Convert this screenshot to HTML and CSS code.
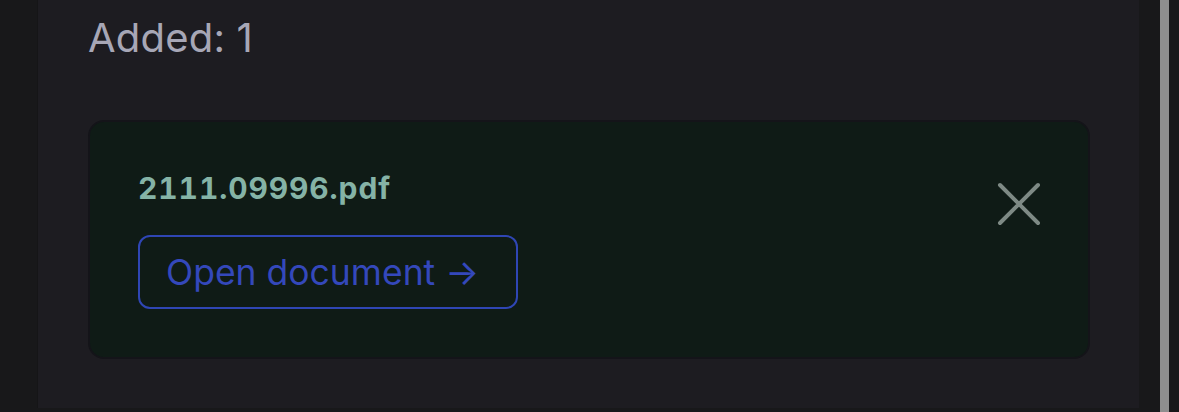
FILE: index.html
```html
<!DOCTYPE html>
<html lang="en">
<head>
<meta charset="utf-8">
<title>Added</title>
<link rel="stylesheet" href="styles.css">
</head>
<body>
<div class="layout">
  <main class="panel">
    <h2 class="summary">Added: 1</h2>
    <div class="card">
      <div class="card-body">
        <div class="filename">2111.09996.pdf</div>
        <a class="open-btn" href="#">Open document <span class="arrow">→</span></a>
      </div>
      <button class="close" aria-label="Dismiss">
        <svg width="44" height="44" viewBox="0 0 44 44" fill="none" stroke="currentColor" stroke-width="4" stroke-linecap="round">
          <path d="M3 3 L41 41 M41 3 L3 41"/>
        </svg>
      </button>
    </div>
  </main>
  <div class="gutter">
    <div class="scrollbar"></div>
  </div>
</div>
</body>
</html>
```

FILE: styles.css
```css
html, body {
  margin: 0;
  padding: 0;
  background: #18181a;
  font-family: Inter, "Noto Sans", sans-serif;
  height: 412px;
  overflow: hidden;
}

.layout {
  display: flex;
  height: 408px;
  padding-left: 37px;
}

.panel {
  width: 1102px;
  box-sizing: border-box;
  background: #1d1c21;
  border-left: 1px solid #151517;
  padding: 0 49px 0 50px;
}

.summary {
  margin: 0;
  padding-top: 14px;
  font-size: 40px;
  line-height: 48px;
  font-weight: 400;
  letter-spacing: 0.2px;
  color: #a7a7b6;
}

.card {
  margin-top: 58px;
  display: flex;
  justify-content: space-between;
  align-items: flex-start;
  background: #0f1b16;
  border: 2px solid #141419;
  border-radius: 16px;
  padding: 49px 47px 48px 48px;
}

.card-body {
  display: flex;
  flex-direction: column;
  align-items: flex-start;
  gap: 30px;
}

.filename {
  font-size: 30px;
  line-height: 34px;
  font-weight: 700;
  font-variant-numeric: tabular-nums;
  letter-spacing: 0.9px;
  color: #85b3a6;
}

.open-btn {
  display: inline-block;
  font-size: 35.5px;
  line-height: 40px;
  color: #3448bb;
  text-decoration: none;
  border: 2px solid #2f46b4;
  border-radius: 12px;
  padding: 16px 37px 14px 26px;
  white-space: nowrap;
}

.close {
  margin-top: 11px;
  background: none;
  border: 0;
  padding: 0;
  color: #7e8a85;
  display: block;
  line-height: 0;
}

.gutter {
  width: 39px;
  height: 412px;
  display: flex;
  padding-left: 21px;
  box-sizing: border-box;
}

.scrollbar {
  width: 9px;
  height: 412px;
  background: #8e8e8e;
}
```
